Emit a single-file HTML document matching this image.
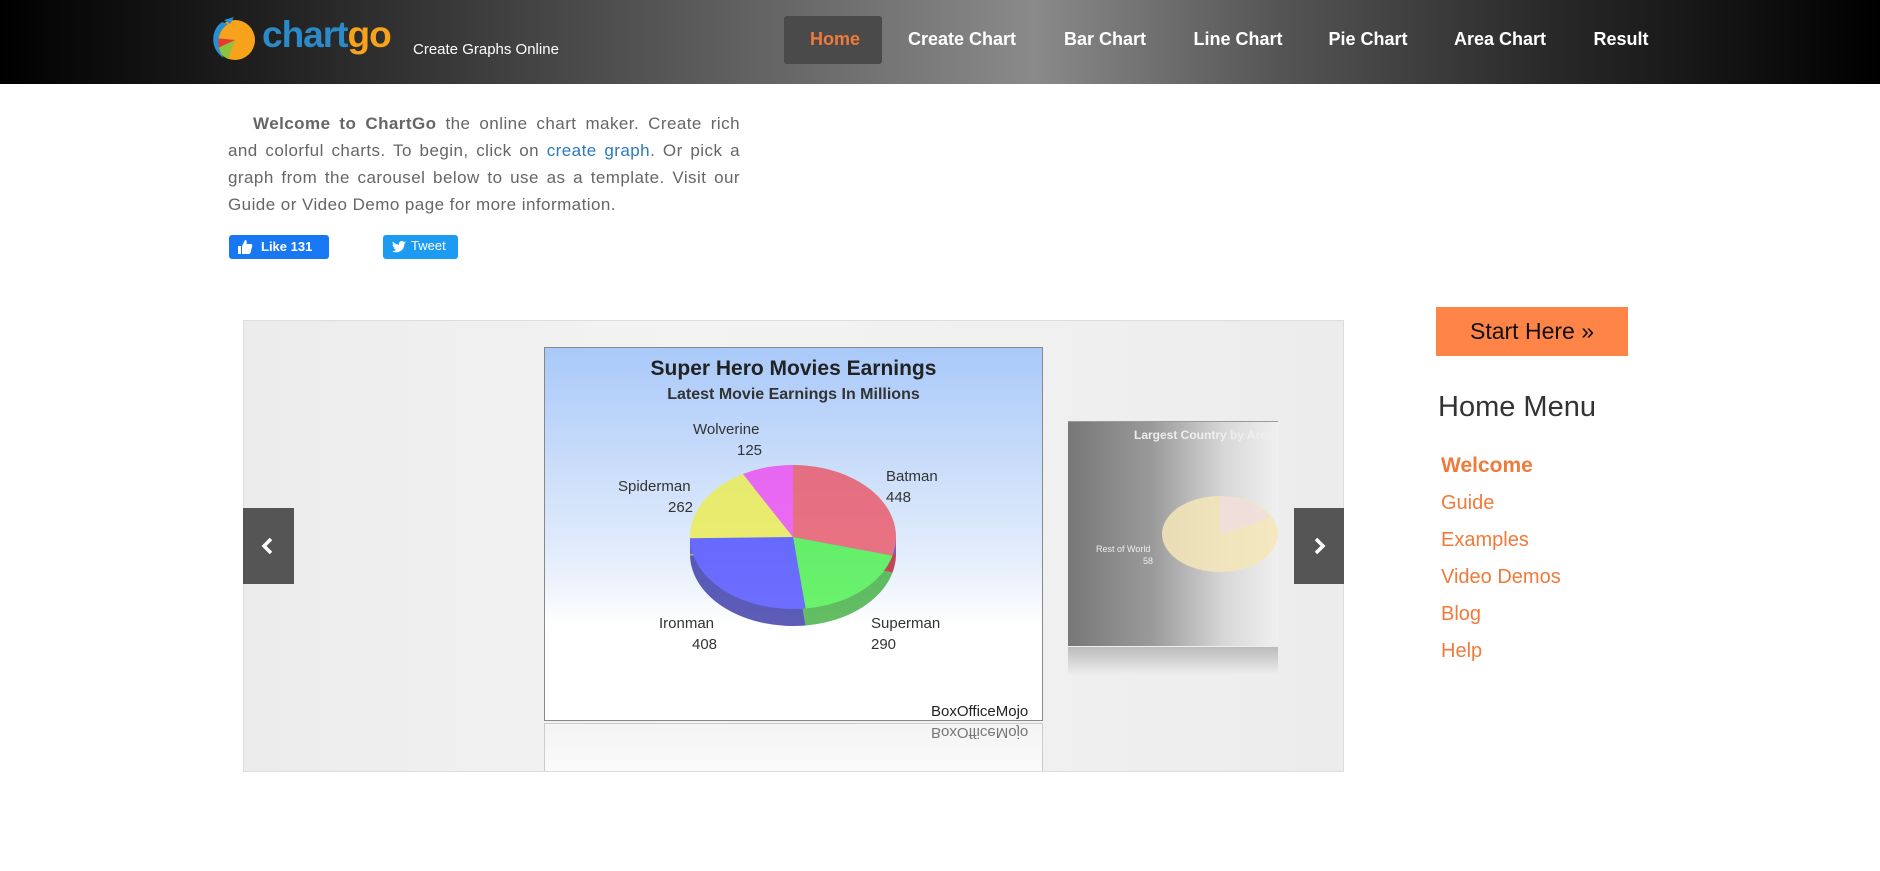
<!DOCTYPE html>
<html><head><meta charset="utf-8"><style>
*{margin:0;padding:0;box-sizing:border-box}
body{width:1880px;height:871px;background:#fff;font-family:"Liberation Sans",sans-serif;position:relative;overflow:hidden}
.hdr{position:absolute;left:0;top:0;width:1880px;height:84px;background:linear-gradient(to right,#000 0%,#222 15%,#555 35%,#8a8a8a 55%,#555 68%,#2a2a2a 82%,#000 100%)}
.a{position:absolute;white-space:nowrap}
.nav{position:absolute;top:29px;color:#fff;font-weight:bold;font-size:18px;transform:translateX(-50%)}
.p{position:absolute;left:228px;top:110px;width:512px;font-size:17px;line-height:27px;color:#666;text-align:justify;text-indent:25px;letter-spacing:0.45px}
.menu{position:absolute;left:1441px;color:#f07a3a;font-size:20px}
</style></head><body>
<div class="hdr"></div>
<svg class="a" style="left:208px;top:14px" width="50" height="50" viewBox="0 0 50 50">
<circle cx="27" cy="26" r="20" fill="#f7a21b"/>
<path d="M27 26 L10 34 A20 20 0 0 0 20 45 Z" fill="#8bc53f"/>
<path d="M27 26 L7 24 A20 20 0 0 0 10 34 Z" fill="#e53a2f"/>
<path d="M14 8 C2 16 2 36 16 44 C8 34 8 18 20 10 Z" fill="#2a8fd0"/>
<path d="M16 6 L26 3 L22 10 Z" fill="#2a8fd0"/>
</svg>
<div class="a" style="left:262px;top:14px;font-size:37px;font-weight:bold;letter-spacing:-1px;color:#2b8ac8">chart<span style="color:#f7a21b">go</span></div>
<div class="a" style="left:413px;top:41px;font-size:15px;color:#fff">Create Graphs Online</div>
<div class="a" style="left:784px;top:16px;width:98px;height:48px;background:#4a4a4a;border-radius:3px"></div>
<div class="nav" style="left:835px;color:#f07a3a">Home</div>
<div class="nav" style="left:962px">Create Chart</div>
<div class="nav" style="left:1105px">Bar Chart</div>
<div class="nav" style="left:1238px">Line Chart</div>
<div class="nav" style="left:1368px">Pie Chart</div>
<div class="nav" style="left:1500px">Area Chart</div>
<div class="nav" style="left:1621px">Result</div>

<div class="p"><b>Welcome to ChartGo</b> the online chart maker. Create rich and colorful charts. To begin, click on <span style="color:#2a7ab8">create graph</span>. Or pick a graph from the carousel below to use as a template. Visit our Guide or Video Demo page for more information.</div>
<div class="a" style="left:229px;top:235px;width:100px;height:24px;background:#1877f2;border-radius:3px;color:#fff;font-weight:bold;font-size:13px;line-height:24px;padding-left:32px">Like 131
<svg style="position:absolute;left:8px;top:4px" width="16" height="16" viewBox="0 0 16 16"><path d="M1 7h3v8H1zM5 7l3-6c2 0 2 2 1.5 4H14c1 0 1.5 1 1.2 2l-1.5 6c-.3 1-1 2-2 2H5z" fill="#fff"/></svg></div>
<div class="a" style="left:383px;top:235px;width:75px;height:24px;background:#1d9bf0;border-radius:3px;color:#fff;font-size:13px;line-height:22px;padding-left:28px">Tweet
<svg style="position:absolute;left:9px;top:6px" width="14" height="12" viewBox="0 0 14 12"><path d="M14 1.5c-.5.2-1 .4-1.6.4.6-.4 1-1 1.2-1.6-.6.3-1.200.6-1.8.7A2.8 2.8 0 0 0 7 3.6 8 8 0 0 1 1 .6a2.8 2.8 0 0 0 .9 3.8c-.5 0-.9-.2-1.300-.4 0 1.4 1 2.5 2.300 2.800-.4.1-.9.1-1.300 0 .4 1.100 1.400 1.900 2.700 2A5.7 5.7 0 0 1 0 10a8 8 0 0 0 12.300-7.100c.6-.4 1.100-.9 1.500-1.400z" fill="#fff"/></svg></div>

<div class="a" style="left:243px;top:320px;width:1101px;height:452px;background:linear-gradient(to right,#ececec,#f3f3f3 40%,#f0f0f0 70%,#ececec);border:1px solid #ddd"></div>
<div class="a" style="left:544px;top:347px;width:499px;height:374px;border:1px solid #888;background:linear-gradient(#a9c9f9,#e2ecfb 55%,#fff 75%)"></div>
<div class="a" style="left:544px;top:723px;width:499px;height:48px;border:1px solid #ccc;border-bottom:none;background:linear-gradient(#f4f4f4,#fafafa)"></div>
<div class="a" style="left:931px;top:724px;font-size:15px;color:#777;transform:scaleY(-1)">BoxOfficeMojo</div>
<div class="a" style="left:544px;top:357px;width:499px;text-align:center;font-size:21px;font-weight:bold;color:#222">Super Hero Movies Earnings</div>
<div class="a" style="left:544px;top:386px;width:499px;text-align:center;font-size:16px;font-weight:bold;color:#333">Latest Movie Earnings In Millions</div>
<svg class="a" style="left:0;top:0" width="1880" height="871">
<g opacity="0.75">
<g transform="translate(0,17)">
<path d="M793 537 L793 465 A103 72 0 0 1 892.5 555.6 Z" fill="#b01020"/>
<path d="M793 537 L892.5 555.6 A103 72 0 0 1 805.6 608.5 Z" fill="#30a830"/>
<path d="M793 537 L805.6 608.5 A103 72 0 0 1 690 538.3 Z" fill="#2828a0"/>
<path d="M793 537 L690 538.3 A103 72 0 0 1 743 474 Z" fill="#b0b020"/>
<path d="M793 537 L743 474 A103 72 0 0 1 793 465 Z" fill="#c020c0"/>
</g>
<rect x="690" y="537" width="206" height="17" fill="#3a3ac0"/>
<path d="M793 537 L793 465 A103 72 0 0 1 892.5 555.6 Z" fill="#ec4a5a"/>
<path d="M793 537 L892.5 555.6 A103 72 0 0 1 805.6 608.5 Z" fill="#3cf03c"/>
<path d="M793 537 L805.6 608.5 A103 72 0 0 1 690 538.3 Z" fill="#4040ff"/>
<path d="M793 537 L690 538.3 A103 72 0 0 1 743 474 Z" fill="#eeee40"/>
<path d="M793 537 L743 474 A103 72 0 0 1 793 465 Z" fill="#f040f0"/>
</g>
<g font-family="Liberation Sans" font-size="15" fill="#333">
<text x="693" y="434">Wolverine</text><text x="737" y="455">125</text>
<text x="618" y="491">Spiderman</text><text x="668" y="512">262</text>
<text x="886" y="481">Batman</text><text x="886" y="502">448</text>
<text x="659" y="628">Ironman</text><text x="692" y="649">408</text>
<text x="871" y="628">Superman</text><text x="871" y="649">290</text>
<text x="931" y="716" fill="#222">BoxOfficeMojo</text>
</g>
</svg>
<div class="a" style="left:1068px;top:421px;width:210px;height:225px;border-top:1px solid #999;background:linear-gradient(to right,#777,#9a9a9a 40%,#d8d8d8 75%,#f0f0f0)"></div>
<div class="a" style="left:1068px;top:647px;width:210px;height:28px;background:linear-gradient(#bbb,#eee)"></div>
<div class="a" style="left:1134px;top:428px;font-size:12px;font-weight:bold;color:#eee">Largest Country by Area</div>
<svg class="a" style="left:1150px;top:488px" width="130" height="100"><ellipse cx="70" cy="46" rx="58" ry="38" fill="#f5e6b8" opacity=".85"/><path d="M70 46 L70 8 A58 38 0 0 1 120 30 Z" fill="#eedce6" opacity=".7"/></svg>
<div class="a" style="left:1096px;top:544px;font-size:9px;color:#eee">Rest of World</div>
<div class="a" style="left:1143px;top:556px;font-size:9px;color:#eee">58</div>
<div class="a" style="left:243px;top:508px;width:51px;height:76px;background:#555"></div>
<svg class="a" style="left:260px;top:537px" width="16" height="18"><path d="M11 2 L4 9 L11 16" stroke="#fff" stroke-width="3.5" fill="none"/></svg>
<div class="a" style="left:1294px;top:508px;width:50px;height:76px;background:#555"></div>
<svg class="a" style="left:1311px;top:537px" width="16" height="18"><path d="M5 2 L12 9 L5 16" stroke="#fff" stroke-width="3.5" fill="none"/></svg>
<div class="a" style="left:1436px;top:307px;width:192px;height:49px;background:#ff8447;color:#111;font-size:23px;line-height:49px;text-align:center">Start Here »</div>
<div class="a" style="left:1438px;top:391px;font-size:29px;color:#333">Home Menu</div>
<div class="menu" style="top:454px;font-weight:bold;font-size:21px">Welcome</div>
<div class="menu" style="top:492px">Guide</div>
<div class="menu" style="top:529px">Examples</div>
<div class="menu" style="top:566px">Video Demos</div>
<div class="menu" style="top:603px">Blog</div>
<div class="menu" style="top:640px">Help</div>
</body></html>
